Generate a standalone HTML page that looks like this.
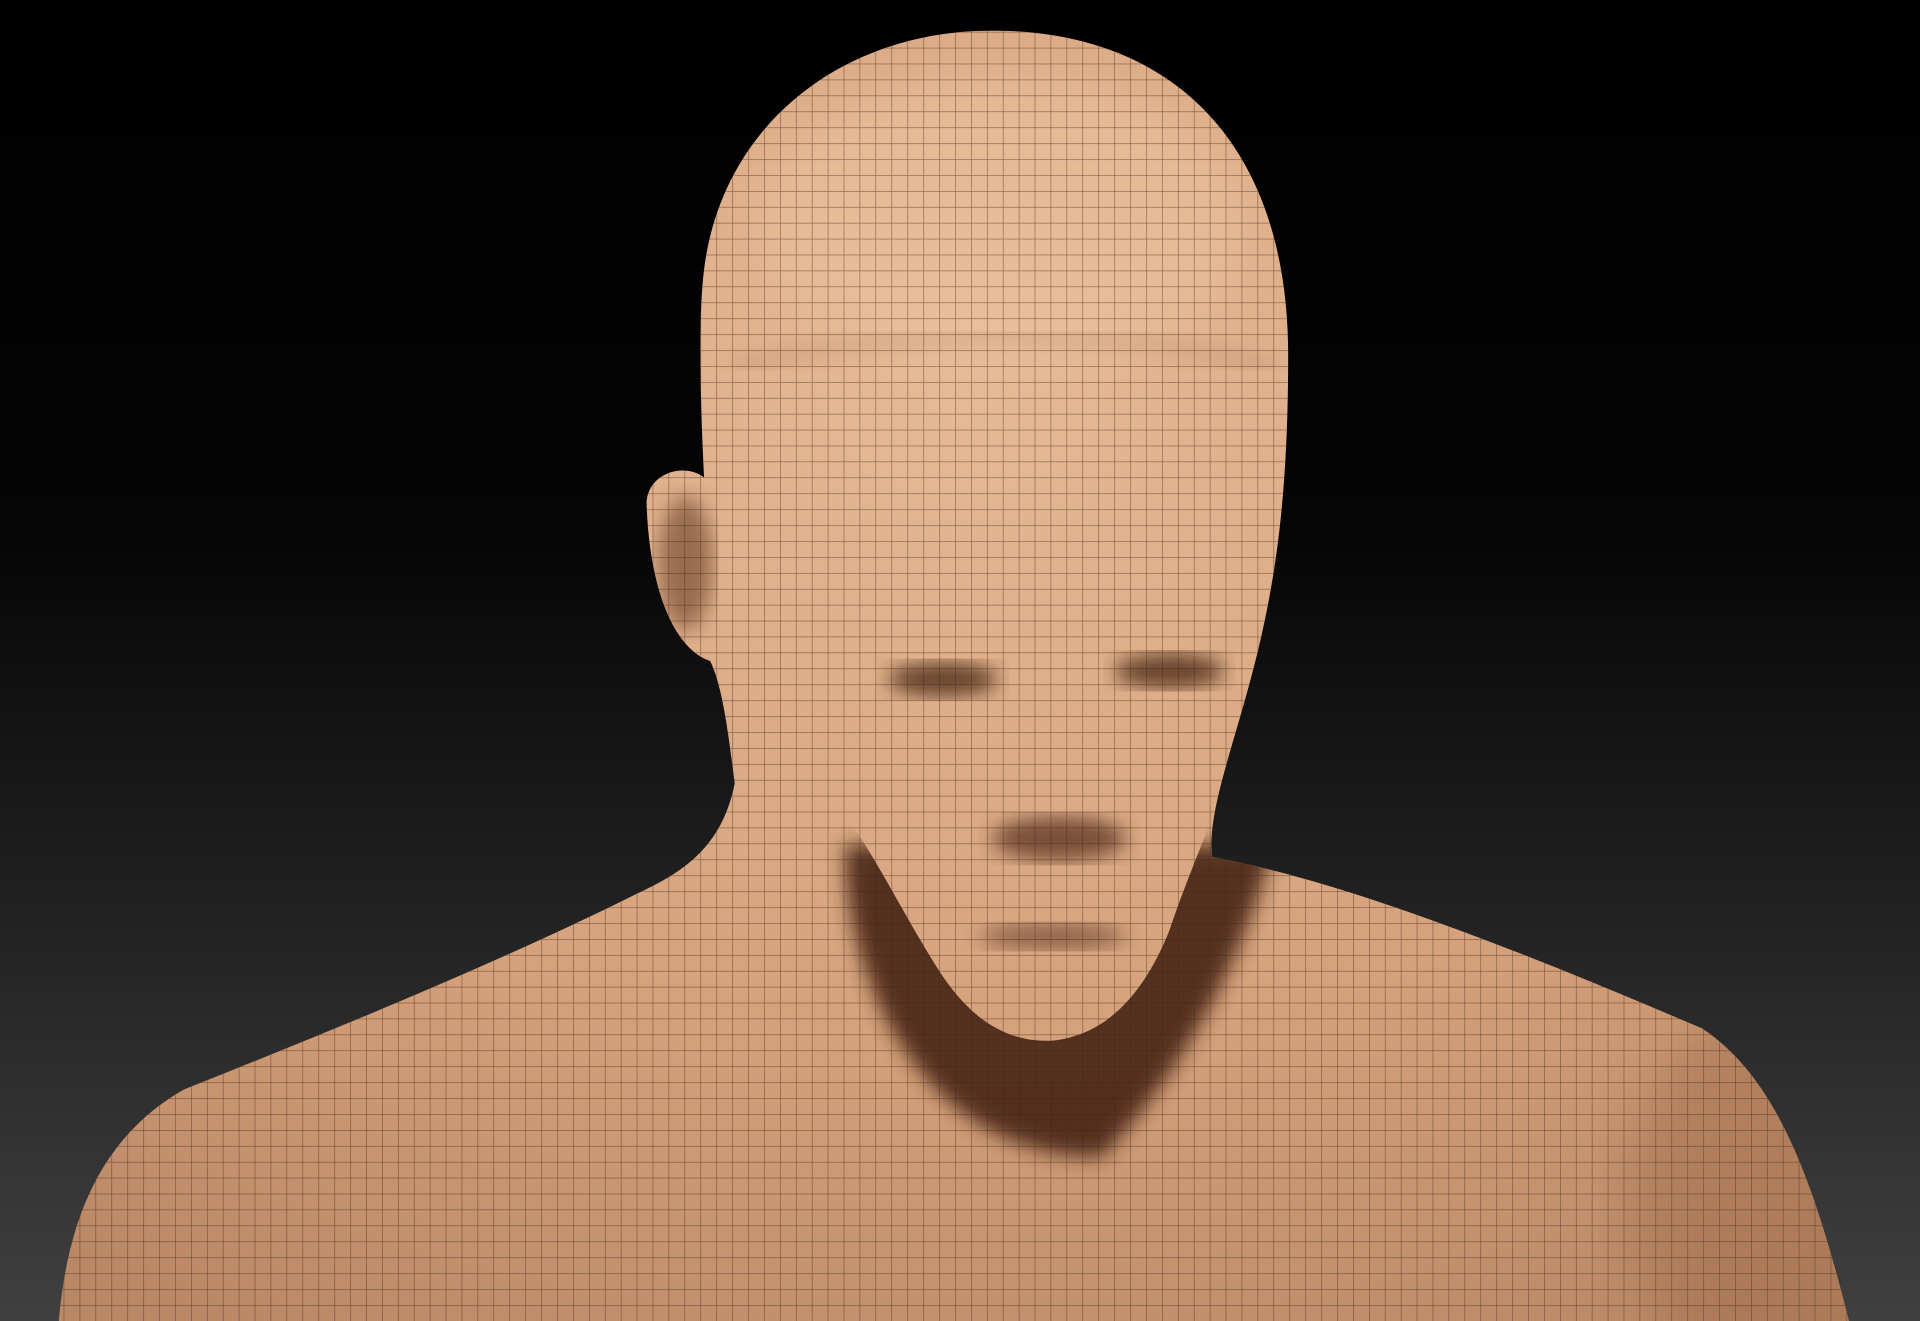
<!DOCTYPE html>
<html><head><meta charset="utf-8"><style>
html,body{margin:0;padding:0;background:#000;overflow:hidden;width:1920px;height:1321px}
svg{display:block;width:1920px;height:1321px;position:absolute;left:0;top:0}
</style></head><body>
<svg viewBox="0 0 1568 1079" preserveAspectRatio="none" xmlns="http://www.w3.org/2000/svg">
<defs>
<linearGradient id="bg" x1="0" y1="0" x2="0" y2="1">
<stop offset="0" stop-color="#000"/><stop offset="0.4" stop-color="#050505"/><stop offset="1" stop-color="#404040"/>
</linearGradient>
<radialGradient id="skin" cx="0.5" cy="0.3" r="0.8">
<stop offset="0" stop-color="#e6b995"/><stop offset="0.6" stop-color="#d6a27c"/><stop offset="1" stop-color="#bb8866"/>
</radialGradient>
<pattern id="grid" width="13" height="13" patternUnits="userSpaceOnUse">
<path d="M0 0H13M0 0V13" stroke="#3a2518" stroke-width="1" opacity="0.6" fill="none"/>
</pattern>
<filter id="b20"><feGaussianBlur stdDeviation="20"/></filter>
<filter id="b8"><feGaussianBlur stdDeviation="8"/></filter>
<clipPath id="fig">
<path d="M810,25 C960,25 1052,120 1052,290 C1052,380 1046,450 1030,520 C1012,600 985,660 990,700 C1100,720 1250,780 1390,840 C1450,880 1480,960 1510,1079 L48,1079 C55,1000 80,930 150,890 C250,850 400,790 520,730 C560,712 590,690 600,640 C595,600 590,560 580,540 C550,530 530,480 528,410 C530,385 560,378 575,390 C572,330 570,260 575,220 C590,100 690,25 810,25 Z"/>
</clipPath>
<clipPath id="face">
<path id="facep" d="M600,400 L1045,400 C1040,470 1035,520 1025,560 C1005,640 975,700 955,760 C935,810 905,845 860,850 C820,852 790,830 765,790 C740,750 720,710 700,680 C650,640 610,600 595,540 Z"/>
</clipPath>
<mask id="noface">
<rect width="1568" height="1079" fill="#fff"/>
<path d="M600,400 L1045,400 C1040,470 1035,520 1025,560 C1005,640 975,700 955,760 C935,810 905,845 860,850 C820,852 790,830 765,790 C740,750 720,710 700,680 C650,640 610,600 595,540 Z" fill="#000"/>
</mask>
</defs>
<rect width="1568" height="1079" fill="url(#bg)"/>
<g clip-path="url(#fig)">
<rect width="1568" height="1079" fill="url(#skin)"/>
<ellipse cx="1450" cy="980" rx="120" ry="160" fill="#a06e4e" opacity="0.5" filter="url(#b20)"/>
<ellipse cx="820" cy="180" rx="200" ry="120" fill="#f0c7a5" opacity="0.45" filter="url(#b20)"/>
<g mask="url(#noface)">
<path d="M690,690 L1040,690 C1010,800 960,880 900,945 C820,945 760,905 720,825 C700,780 690,740 690,690Z" fill="#4a2814" opacity="0.92" filter="url(#b8)"/>
</g>
<ellipse cx="560" cy="460" rx="22" ry="55" fill="#6a4028" opacity="0.6" filter="url(#b8)"/>
<path d="M600,300 C700,270 900,260 1040,300" stroke="#a07050" stroke-width="14" fill="none" opacity="0.22" filter="url(#b8)"/>
<g clip-path="url(#face)">
<ellipse cx="770" cy="555" rx="45" ry="14" fill="#4a2a18" opacity="0.8" filter="url(#b8)"/>
<ellipse cx="955" cy="548" rx="45" ry="14" fill="#4a2a18" opacity="0.8" filter="url(#b8)"/>
<ellipse cx="865" cy="685" rx="55" ry="18" fill="#5a3320" opacity="0.75" filter="url(#b8)"/>
<ellipse cx="860" cy="765" rx="60" ry="10" fill="#5a3320" opacity="0.6" filter="url(#b8)"/>
</g>
<rect width="1568" height="1079" fill="url(#grid)"/>
</g>
</svg>
</body></html>
